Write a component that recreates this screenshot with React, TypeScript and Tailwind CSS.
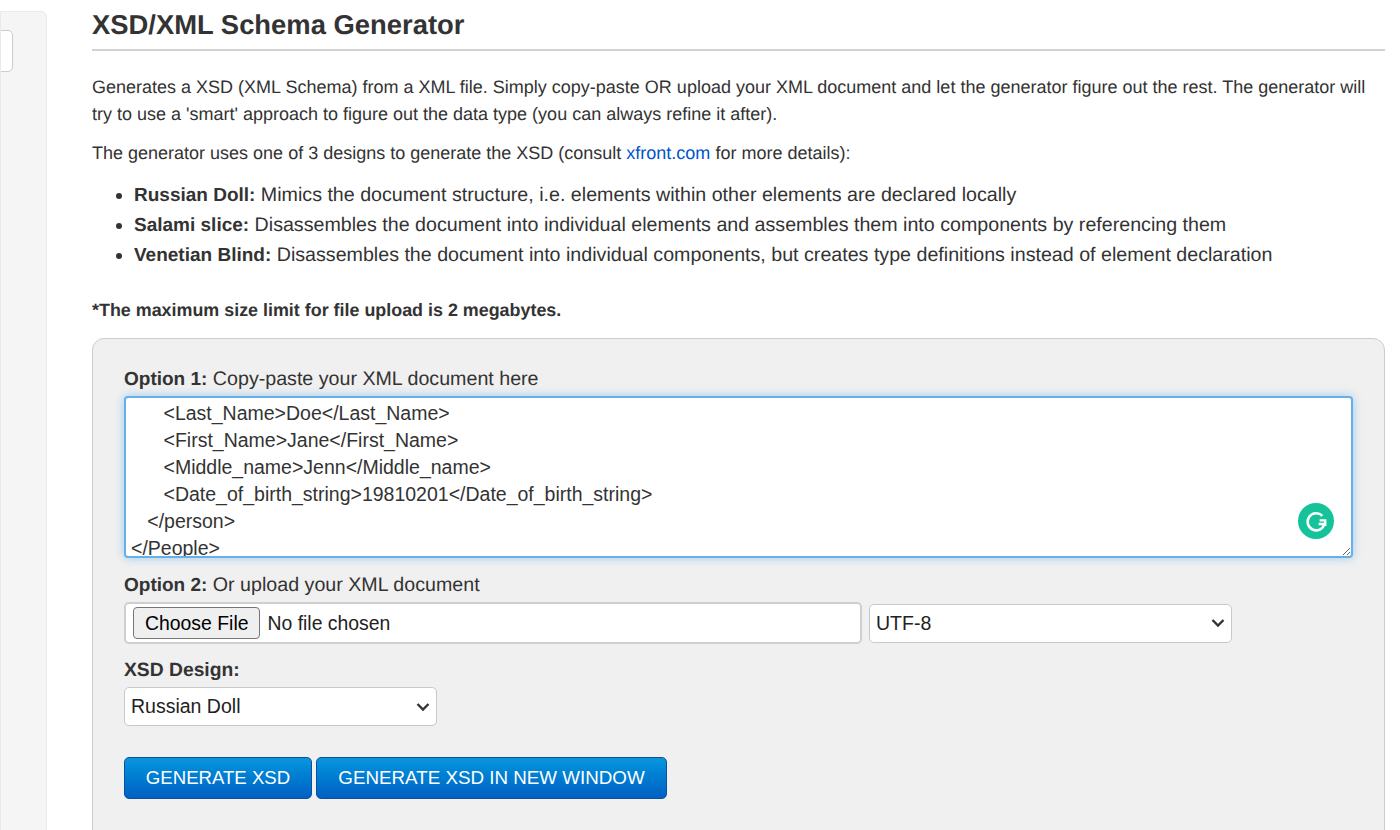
import React from 'react';

const xmlText = [
  '      <Last_Name>Doe</Last_Name>',
  '      <First_Name>Jane</First_Name>',
  '      <Middle_name>Jenn</Middle_name>',
  '      <Date_of_birth_string>19810201</Date_of_birth_string>',
  '   </person>',
  '</People>',
].join('\n');

const Chevron = () => (
  <svg viewBox="0 0 14 10" className="absolute right-[7px] top-1/2 -translate-y-1/2 w-[14px] h-[10px] pointer-events-none">
    <path d="M1.5 2 L7 7.5 L12.5 2" fill="none" stroke="#333" strokeWidth="2.4" />
  </svg>
);

const SelectBox = ({ label, className }: { label: string; className: string }) => (
  <div className={`relative ${className}`}>
    <select className="w-full h-full appearance-none bg-white border border-[#c8c8c8] rounded-[5px] pl-[6px] text-[19.5px] text-[#222] outline-none">
      <option>{label}</option>
    </select>
    <Chevron />
  </div>
);

const App: React.FC = () => {
  return (
    <div className="w-[1400px] h-[830px] overflow-hidden bg-white flex font-['Liberation_Sans',Arial,sans-serif] text-[18px] leading-[27px] text-[#333] [text-rendering:geometricPrecision]">
      {/* sidebar */}
      <aside className="w-[47px] shrink-0 h-[900px] mt-[11px] bg-[#f5f5f5] border border-[#e9e9e9] rounded-r-[6px] pt-[18px] overflow-hidden">
        <div className="w-[30px] -ml-[18px] h-[42px] bg-white border border-[#cccccc] rounded-[5px]" />
      </aside>

      <main className="ml-[45px] w-[1293px] shrink-0">
        <h1 className="text-[27.4px] leading-[34px] font-bold mt-[8px] pb-[7px] border-b-2 border-[#d2d2d2]">
          XSD/XML Schema Generator
        </h1>

        <p className="mt-[23px]">
          Generates a XSD (XML Schema) from a XML file. Simply copy-paste OR upload your XML document and let the generator figure out the rest. The generator will try to use a 'smart' approach to figure out the data type (you can always refine it after).
        </p>
        <p className="mt-[12px]">
          The generator uses one of 3 designs to generate the XSD (consult <a className="text-[#0055cc]">xfront.com</a> for more details):
        </p>

        <ul className="list-disc pl-[42px] mt-[13px] leading-[30px] text-[19.65px]">
          <li><b className="text-[19px] leading-none">Russian Doll:</b> Mimics the document structure, i.e. elements within other elements are declared locally</li>
          <li><b className="text-[19px] leading-none">Salami slice:</b> Disassembles the document into individual elements and assembles them into components by referencing them</li>
          <li><b className="text-[19px] leading-none">Venetian Blind:</b> Disassembles the document into individual components, but creates type definitions instead of element declaration</li>
        </ul>

        <p className="font-bold mt-[27px] text-[17.9px]">*The maximum size limit for file upload is 2 megabytes.</p>

        <section className="mt-[14px] h-[520px] bg-[#f0f0f0] border border-[#cccccc] rounded-[12px] pt-[27px] pl-[31px] pr-[31px]">
          <label className="block text-[19.65px]"><b className="text-[19px] leading-none">Option 1:</b> Copy-paste your XML document here</label>
          <div className="relative mt-[3px] h-[162px]">
            <textarea
              readOnly
              value={xmlText}
              className="block w-full h-full bg-white border-2 border-[#66afe9] rounded-[4px] shadow-[0_0_10px_rgba(102,175,233,0.6)] pl-[5px] pt-[2px] text-[19.5px] leading-[27px] text-[#333] outline-none whitespace-pre overflow-hidden resize"
            />
            <span className="absolute left-[1174px] top-[107px] w-[36px] h-[36px] rounded-full bg-[#15c39a] flex items-center justify-center">
              <svg viewBox="0 0 24 24" className="w-[25px] h-[25px]">
                <path d="M17.6 6.6 A8.2 8.2 0 1 0 19.6 14.4 H14" fill="none" stroke="white" strokeWidth="2.4" />
                <path d="M15 11 L20.4 11 L20.4 16.4" fill="none" stroke="white" strokeWidth="2.2" />
              </svg>
            </span>
          </div>

          <label className="block mt-[14px] text-[19.65px]"><b className="text-[19px] leading-none">Option 2:</b> Or upload your XML document</label>
          <div className="flex items-center gap-[7px] mt-[3px]">
            <div className="w-[738px] h-[42px] bg-white border-2 border-[#cfcfcf] rounded-[5px] flex items-center pl-[7px]">
              <input
                type="file"
                className="text-[19.4px] text-[#222] w-full file:mr-[7px] file:h-[32px] file:px-[11px] file:bg-[#efefef] file:border file:border-[#767676] file:rounded-[4px] file:text-[19.4px] file:text-black"
              />
            </div>
            <SelectBox label="UTF-8" className="w-[363px] h-[39px]" />
          </div>

          <label className="block font-bold mt-[13px] text-[19.3px]">XSD Design:</label>
          <SelectBox label="Russian Doll" className="w-[313px] h-[39px] mt-[3px]" />

          <div className="flex gap-[4px] mt-[31px]">
            <button className="h-[42px] w-[188px] pb-[2px] rounded-[5px] border border-[#0b4f9e] bg-gradient-to-b from-[#0a96dd] to-[#0060c4] text-white text-[18.6px]">
              GENERATE XSD
            </button>
            <button className="h-[42px] w-[351px] pb-[2px] rounded-[5px] border border-[#0b4f9e] bg-gradient-to-b from-[#0a96dd] to-[#0060c4] text-white text-[18.8px]">
              GENERATE XSD IN NEW WINDOW
            </button>
          </div>
        </section>
      </main>
    </div>
  );
};

export default App;
